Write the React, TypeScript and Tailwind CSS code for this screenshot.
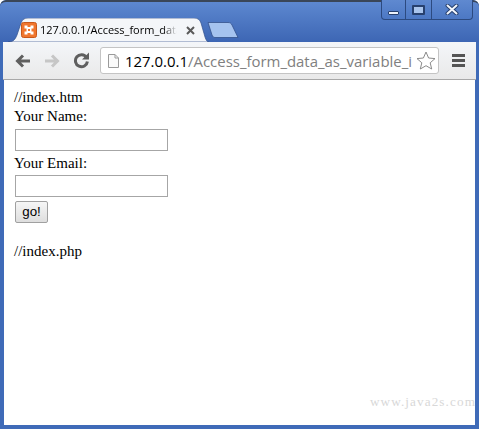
export default function App() {
  return (
    <div className="relative w-[479px] h-[429px] flex flex-col overflow-hidden rounded-t-[6px] bg-[#3f6bb8] font-['Open_Sans',sans-serif]">
      {/* Title bar with tabs */}
      <div className="relative h-[42px] shrink-0 rounded-t-[6px] border-t-2 border-[#3a4658] bg-gradient-to-b from-[#5d88d0] to-[#3d66b4]">
        <div className="absolute right-[6px] top-[-2px] w-[92px] h-[20px] flex items-stretch rounded-b-[4px] border border-t-0 border-[#2c4a80] bg-gradient-to-b from-[#5f89d0] to-[#4c78c4]">
          <div className="w-[24px] border-r border-[#2c4a80] flex items-center justify-center pt-[6px]">
            <div className="w-[11px] h-[4px] rounded-[1px] bg-[#eef3fb] border border-[#27406e]" />
          </div>
          <div className="w-[26px] border-r border-[#2c4a80] flex items-center justify-center">
            <div className="w-[13px] h-[10px] rounded-[1px] border-2 border-[#27406e] bg-[#a9c4ec]" />
          </div>
          <div className="flex-1 flex items-center justify-center">
            <svg width="14" height="11" viewBox="0 0 14 11">
              <path d="M2.5 1.5 L11.5 9.5 M11.5 1.5 L2.5 9.5" stroke="#27406e" strokeWidth="4" strokeLinecap="round" />
              <path d="M2.5 1.5 L11.5 9.5 M11.5 1.5 L2.5 9.5" stroke="#f2f6fc" strokeWidth="2" strokeLinecap="round" />
            </svg>
          </div>
        </div>
        <div className="absolute left-0 bottom-0 flex items-end">
          <div className="relative ml-[8px] w-[201px] h-[24px] flex items-center pl-[13px]">
            <svg className="absolute inset-0" width="201" height="24" viewBox="0 0 201 24">
              <path d="M0 24 C5 24 7 22 9 17 L13 5 C14 2 16 0 20 0 L186 0 C190 0 192 2 193 5 L197 19 C198 22 199 24 201 24 Z" fill="#f4f6f9" stroke="#34528c" strokeWidth="0.7" />
            </svg>
            <svg className="relative shrink-0" width="16" height="16" viewBox="0 0 16 16">
              <rect x="0.5" y="0.5" width="15" height="15" rx="2" fill="#f0762e" stroke="#c9581a" />
              <path d="M3.5 3.5 H6.5 V5 H9.5 V3.5 H12.5 V6.5 H10.5 V9.5 H12.5 V12.5 H9.5 V11 H6.5 V12.5 H3.5 V9.5 H5.5 V6.5 H3.5 Z M7 7 V9 H9 V7 Z" fill="#fff" fillRule="evenodd" />
            </svg>
            <span className="relative ml-[3px] w-[137px] overflow-hidden whitespace-nowrap text-[11px] leading-[16px] text-black [mask-image:linear-gradient(to_right,black_90%,transparent)]">127.0.0.1/Access_form_data_as_variable</span>
            <svg className="relative ml-[9px] shrink-0" width="9" height="9" viewBox="0 0 9 9">
              <path d="M1 1 L8 8 M8 1 L1 8" stroke="#5a5a5a" strokeWidth="2" />
            </svg>
          </div>
          <svg className="mb-[4px] -ml-[2px]" width="32" height="16" viewBox="0 0 32 16">
            <path d="M1 0.5 L21 0.5 C23 0.5 24 1 25 3 L31 15.5 L8 15.5 C6.5 15.5 6 15 5 13 Z" fill="#a5c3ef" stroke="#34528c" strokeWidth="0.8" />
          </svg>
        </div>
      </div>

      {/* Toolbar */}
      <div className="h-[38px] shrink-0 mx-[3px] flex items-center border-b border-[#a8a8a8] bg-gradient-to-b from-[#f4f6f9] to-[#e9e9e9] relative">
        <svg className="ml-[12px] shrink-0" width="16" height="14" viewBox="0 0 16 14">
          <path d="M15 7 H3.5 M8 1.5 L2.5 7 L8 12.5" fill="none" stroke="#5f5f5f" strokeWidth="3" />
        </svg>
        <svg className="ml-[13px] shrink-0" width="16" height="14" viewBox="0 0 16 14">
          <path d="M1 7 H12.5 M8 1.5 L13.5 7 L8 12.5" fill="none" stroke="#c6c6c6" strokeWidth="3" />
        </svg>
        <svg className="ml-[13px] shrink-0" width="17" height="17" viewBox="0 0 17 17">
          <path d="M13.5 5.5 A6 6 0 1 0 14.4 9.5" fill="none" stroke="#5f5f5f" strokeWidth="3" />
          <path d="M16 0.5 V7.5 H9 Z" fill="#5f5f5f" />
        </svg>
        <div className="ml-[10px] w-[339px] h-[27px] shrink-0 rounded-[3px] border border-[#c4c4c4] bg-white flex items-center pl-[7px]">
          <svg className="shrink-0" width="11" height="14" viewBox="0 0 11 14">
            <path d="M0.5 0.5 H7 L10.5 4 V13.5 H0.5 Z M7 0.5 V4 H10.5" fill="#fafafa" stroke="#9a9a9a" />
          </svg>
          <span className="ml-[6px] w-[289px] whitespace-nowrap text-[14.95px] leading-[24px] text-[#808080]"><span className="text-black">127.0.0.1</span>/Access_form_data_as_variable_i</span>
          <svg className="ml-[2px] shrink-0" width="20" height="19" viewBox="0 0 20 19">
            <path d="M10 1 L12.6 7 L19 7.6 L14.2 11.8 L15.7 18 L10 14.7 L4.3 18 L5.8 11.8 L1 7.6 L7.4 7 Z" fill="#fff" stroke="#8a8a8a" />
          </svg>
        </div>
        <div className="ml-[13px] w-[13px] flex flex-col gap-[2px]">
          <div className="h-[3px] bg-[#555]" />
          <div className="h-[3px] bg-[#555]" />
          <div className="h-[3px] bg-[#555]" />
        </div>
      </div>

      {/* Page */}
      <div className="relative flex-1 mx-[4px] mb-[4px] bg-white pl-[10px] pt-[8px] font-['Liberation_Serif',serif] text-[15px] leading-[18px] text-black">
        <div>//index.htm</div>
        <div className="mt-[1px]">Your Name:</div>
        <input className="block mt-[4px] ml-[1px] w-[153px] h-[22px] border border-[#a6a6a6] bg-white" />
        <div className="mt-[3px]">Your Email:</div>
        <input className="block mt-[3px] ml-[1px] w-[153px] h-[22px] border border-[#a6a6a6] bg-white" />
        <button className="block mt-[4px] ml-[1px] w-[33px] h-[22px] rounded-[2px] border border-[#a0a0a0] bg-gradient-to-b from-[#f6f6f6] to-[#dedede] font-['Liberation_Sans',sans-serif] text-[13.33px] leading-[20px] text-black">go!</button>
        <div className="mt-[19px]">//index.php</div>
        <div className="absolute right-[-1px] bottom-[15px] whitespace-nowrap text-[13.2px] leading-[16px] tracking-[1.1px] text-[#d8d8d8]">www.java2s.com</div>
      </div>
    </div>
  );
}
